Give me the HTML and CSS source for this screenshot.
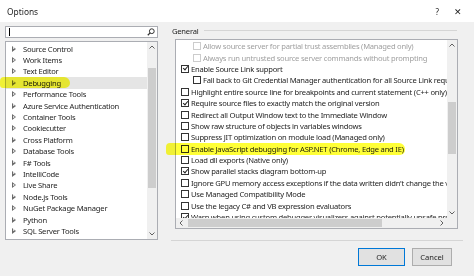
FILE: index.html
```html
<!DOCTYPE html>
<html lang="en">
<head>
    <meta charset="UTF-8">
    <meta name="viewport" content="width=device-width, initial-scale=1.0">
    <title>Options</title>
    <link rel="stylesheet" href="styles.css">
</head>
<body>
<div class="dialog">
    <div class="titlebar">
        <span class="title">Options</span>
        <span class="help">?</span>
        <span class="close">&#x2715;</span>
    </div>

    <div class="main">
        <div class="nav">
            <div class="search">
                <span class="caret"></span>
                <svg class="search-icon" width="8" height="8" viewBox="0 0 8 8">
                    <circle cx="4.8" cy="3.2" r="2.4" fill="none" stroke="#333" stroke-width="1"/>
                    <path d="M3.1 4.9 L0.8 7.2" stroke="#333" stroke-width="1.3"/>
                </svg>
            </div>
            <div class="tree">
                <ul class="tree-items">
                    <li><i class="tri"></i>Source Control</li>
                    <li><i class="tri"></i>Work Items</li>
                    <li><i class="tri"></i>Text Editor</li>
                    <li class="selected"><i class="tri"></i>Debugging</li>
                    <li><i class="tri"></i>Performance Tools</li>
                    <li><i class="tri"></i>Azure Service Authentication</li>
                    <li><i class="tri"></i>Container Tools</li>
                    <li><i class="tri"></i>Cookiecutter</li>
                    <li><i class="tri"></i>Cross Platform</li>
                    <li><i class="tri"></i>Database Tools</li>
                    <li><i class="tri"></i>F# Tools</li>
                    <li><i class="tri"></i>IntelliCode</li>
                    <li><i class="tri"></i>Live Share</li>
                    <li><i class="tri"></i>Node.js Tools</li>
                    <li><i class="tri"></i>NuGet Package Manager</li>
                    <li><i class="tri"></i>Python</li>
                    <li><i class="tri"></i>SQL Server Tools</li>
                </ul>
                <div class="vscroll">
                    <svg class="arrow" width="10" height="11" viewBox="0 0 10 11"><path d="M2.5 6.5 L5 4 L7.5 6.5" fill="none" stroke="#606060" stroke-width="1"/></svg>
                    <div class="track tree-track"><div class="thumb"></div></div>
                    <svg class="arrow" width="10" height="11" viewBox="0 0 10 11"><path d="M2.5 4.5 L5 7 L7.5 4.5" fill="none" stroke="#606060" stroke-width="1"/></svg>
                </div>
            </div>
        </div>

        <div class="page">
            <div class="group-title"><span>General</span><span class="line"></span></div>
            <div class="opts">
                <ul class="opt-items">
                    <li class="sub disabled"><i class="box"></i>Allow source server for partial trust assemblies (Managed only)</li>
                    <li class="sub disabled"><i class="box"></i>Always run untrusted source server commands without prompting</li>
                    <li><i class="box checked"></i>Enable Source Link support</li>
                    <li class="sub"><i class="box"></i>Fall back to Git Credential Manager authentication for all Source Link requests</li>
                    <li><i class="box"></i>Highlight entire source line for breakpoints and current statement (C++ only)</li>
                    <li><i class="box checked"></i>Require source files to exactly match the original version</li>
                    <li><i class="box"></i>Redirect all Output Window text to the Immediate Window</li>
                    <li><i class="box"></i>Show raw structure of objects in variables windows</li>
                    <li><i class="box"></i>Suppress JIT optimization on module load (Managed only)</li>
                    <li><i class="box"></i>Enable JavaScript debugging for ASP.NET (Chrome, Edge and IE)</li>
                    <li><i class="box"></i>Load dll exports (Native only)</li>
                    <li><i class="box checked"></i>Show parallel stacks diagram bottom-up</li>
                    <li><i class="box"></i>Ignore GPU memory access exceptions if the data written didn't change the value</li>
                    <li><i class="box"></i>Use Managed Compatibility Mode</li>
                    <li><i class="box"></i>Use the legacy C# and VB expression evaluators</li>
                    <li><i class="box checked"></i>Warn when using custom debugger visualizers against potentially unsafe processes</li>
                </ul>
                <div class="vscroll">
                    <svg class="arrow" width="10" height="11" viewBox="0 0 10 11"><path d="M2.5 6.5 L5 4 L7.5 6.5" fill="none" stroke="#606060" stroke-width="1"/></svg>
                    <div class="track opt-track"><div class="thumb"></div></div>
                    <svg class="arrow" width="10" height="11" viewBox="0 0 10 11"><path d="M2.5 4.5 L5 7 L7.5 4.5" fill="none" stroke="#606060" stroke-width="1"/></svg>
                </div>
                <div class="hscroll">
                    <svg class="harrow" width="11" height="10" viewBox="0 0 11 10"><path d="M6.5 2.5 L4 5 L6.5 7.5" fill="none" stroke="#606060" stroke-width="1"/></svg>
                    <div class="htrack"><div class="hthumb"></div></div>
                    <svg class="harrow" width="11" height="10" viewBox="0 0 11 10"><path d="M4.5 2.5 L7 5 L4.5 7.5" fill="none" stroke="#606060" stroke-width="1"/></svg>
                </div>
                <div class="corner"></div>
            </div>
            <div class="separator"></div>
        </div>
    </div>

    <div class="footer">
        <button class="btn btn-ok">OK</button>
        <button class="btn">Cancel</button>
    </div>

    <!-- highlighter marks drawn over the dialog -->
    <span class="marker marker-left"></span>
    <span class="marker marker-right"></span>
</div>
</body>
</html>
```

FILE: styles.css
```css
body{
    margin: 0;
    font-family: "Noto Sans", "Liberation Sans", sans-serif;
    font-size: 7.6px;
    letter-spacing: -0.22px;
    color: #1e1e1e;
}
.dialog{
    position: relative;
    width: 474px;
    height: 276px;
    background: #f0f0f0;
    overflow: hidden;
}
.titlebar{
    height: 22px;
    background: #ffffff;
    display: flex;
    align-items: center;
    padding: 0 12px 0 7px;
    font-size: 8.4px;
    letter-spacing: 0;
}
.title{
    flex: 1;
}
.help{
    margin-right: 15px;
    font-size: 8px;
}
.close{
    font-size: 9px;
}
.main{
    display: flex;
    padding: 4px 11px 0 5px;
    gap: 10px;
    height: 216px;
}
.nav{
    width: 153px;
    display: flex;
    flex-direction: column;
    gap: 3px;
}
.search{
    height: 10px;
    background: #fff;
    border: 1px solid #abadb3;
    display: flex;
    align-items: center;
    justify-content: space-between;
    padding: 0 2px 0 3px;
}
.caret{
    width: 1px;
    height: 8px;
    background: #000;
}
.tree{
    height: 197px;
    background: #fff;
    border: 1px solid #abadb3;
    display: flex;
}
.tree-items, .opt-items{
    list-style: none;
    margin: 0;
    padding: 1px 0 0 0;
    flex: 1;
    overflow: hidden;
    white-space: nowrap;
}
.tree-items li{
    height: 11.4px;
    padding-left: 6px;
    display: flex;
    align-items: center;
}
.tree-items li.selected{
    background: #e5e5e5;
}
.tri{
    width: 0;
    height: 0;
    border-top: 3px solid transparent;
    border-bottom: 3px solid transparent;
    border-left: 4px solid #6a6a6a;
    margin-right: 7px;
    position: relative;
}
.tri::after{
    content: "";
    position: absolute;
    left: -3px;
    top: -1.5px;
    border-top: 1.5px solid transparent;
    border-bottom: 1.5px solid transparent;
    border-left: 2px solid #fff;
}
.selected .tri::after{
    border-left-color: #e5e5e5;
}
.vscroll{
    width: 10px;
    background: #f0f0f0;
    display: flex;
    flex-direction: column;
}
.arrow{
    display: block;
    flex: none;
}
.track{
    flex: 1;
    display: flex;
    flex-direction: column;
}
.thumb{
    background: #cdcdcd;
    width: 8px;
    margin: 0 auto;
}
.tree-track .thumb{
    margin-top: 15px;
    height: 120px;
}
.opt-track .thumb{
    margin-top: 51px;
    height: 52px;
}
.page{
    flex: 1;
    display: flex;
    flex-direction: column;
}
.group-title{
    height: 9px;
    display: flex;
    align-items: center;
    gap: 6px;
    padding-left: 4px;
    margin-bottom: 4px;
}
.line{
    flex: 1;
    height: 1px;
    background: #d5d5d5;
    margin-right: 6px;
}
.opts{
    margin-left: 7px;
    margin-right: 5px;
    height: 188px;
    background: #fff;
    border: 1px solid #abadb3;
    display: grid;
    grid-template-columns: 1fr 10px;
    grid-template-rows: 1fr 10px;
}
.opt-items{
    padding-top: 0.5px;
}
.opt-items li{
    height: 11.4px;
    display: flex;
    align-items: center;
    padding-left: 5px;
}
.opt-items li.sub{
    padding-left: 17px;
}
.opt-items li.disabled{
    color: #a0a0a0;
}
.box{
    width: 6px;
    height: 6px;
    border: 1px solid #333;
    background: #fff;
    margin-right: 2px;
    flex: none;
    position: relative;
}
.disabled .box{
    border-color: #cccccc;
}
.box.checked::after{
    content: "";
    position: absolute;
    left: 1.5px;
    top: -0.5px;
    width: 2px;
    height: 4px;
    border-right: 1px solid #222;
    border-bottom: 1px solid #222;
    transform: rotate(40deg);
}
.hscroll{
    background: #f0f0f0;
    display: flex;
    align-items: center;
}
.harrow{
    display: block;
    flex: none;
}
.htrack{
    flex: 1;
    height: 100%;
    display: flex;
    align-items: center;
}
.hthumb{
    margin-left: 1px;
    width: 194px;
    height: 8px;
    background: #cdcdcd;
}
.corner{
    background: #f0f0f0;
}
.separator{
    margin-top: 11px;
    margin-left: 3px;
    height: 1px;
    background: #d5d5d5;
}
.footer{
    display: flex;
    justify-content: flex-end;
    gap: 7px;
    padding: 6px 22px 0 0;
}
.btn{
    height: 18px;
    padding: 0;
    width: 40px;
    font-family: inherit;
    font-size: 7.6px;
    color: #1e1e1e;
    background: #e1e1e1;
    border: 1px solid #adadad;
}
.btn-ok{
    width: 47px;
    border: 1px solid #0078d7;
}
.marker{
    position: absolute;
    background: rgba(255, 255, 20, 0.85);
    mix-blend-mode: multiply;
    border-radius: 4px 6px 5px 3px;
}
.marker-left{
    left: 0;
    top: 77px;
    width: 70px;
    height: 11px;
}
.marker-right{
    left: 166px;
    top: 143px;
    width: 239px;
    height: 12px;
}
```
